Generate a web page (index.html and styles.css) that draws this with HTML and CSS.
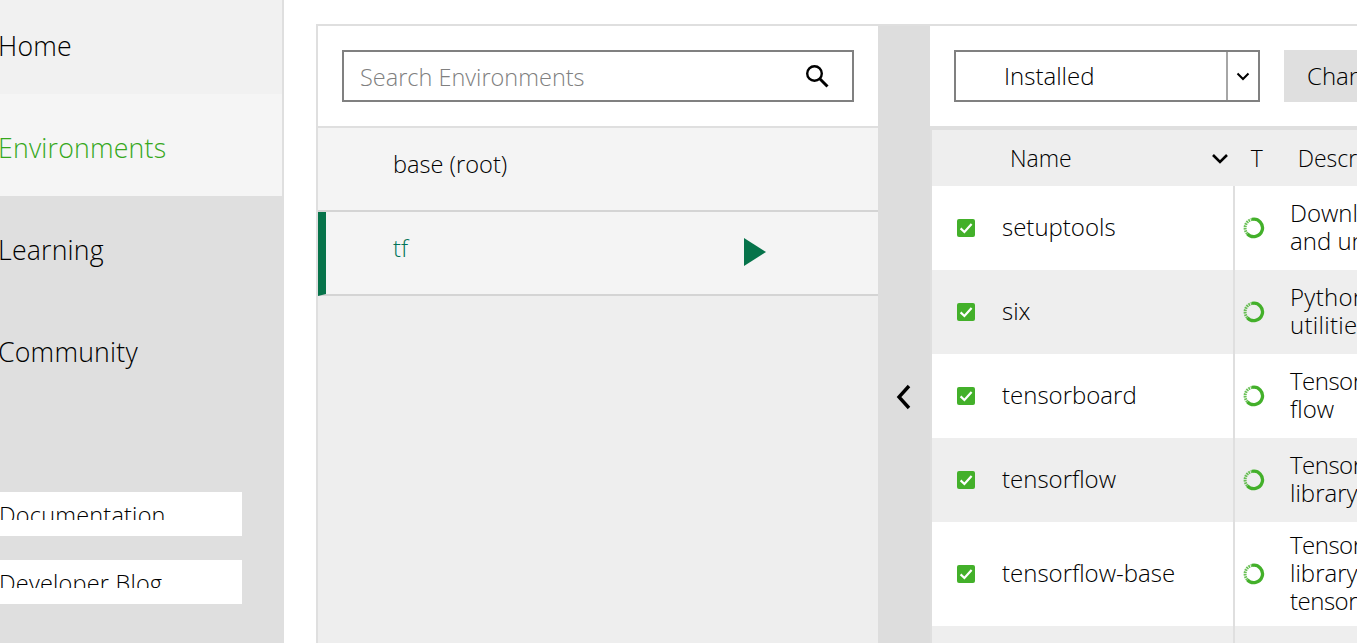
FILE: index.html
```html
<!DOCTYPE html>
<html lang="en">
<head>
<meta charset="utf-8">
<title>Environments</title>
<link rel="stylesheet" href="styles.css">
</head>
<body>
<div class="app">
  <aside class="sidebar">
    <nav class="nav">
      <a class="nav-item nav-home">Home</a>
      <a class="nav-item nav-active">Environments</a>
      <a class="nav-item">Learning</a>
      <a class="nav-item">Community</a>
    </nav>
    <div class="links">
      <a class="link-btn"><span class="link-label">Documentation</span></a>
      <a class="link-btn"><span class="link-label">Developer Blog</span></a>
    </div>
  </aside>
  <main class="main">
    <div class="panel">
      <section class="envs">
        <div class="envs-head">
          <div class="search">
            <span class="search-text">Search Environments</span>
            <svg class="search-icon" width="26" height="26" viewBox="0 0 26 26"><circle cx="10.500" cy="10.500" r="7.300" fill="none" stroke="#000" stroke-width="2.400"/><path d="M15.800 15.800 L23.500 23.500" stroke="#000" stroke-width="3" fill="none"/></svg>
          </div>
        </div>
        <div class="env-row"><span class="env-name">base (root)</span></div>
        <div class="env-row env-selected">
          <span class="env-name">tf</span>
          <svg class="play" width="22" height="28" viewBox="0 0 22 28"><path d="M0 0 L22 14 L0 28 Z" fill="#06734a"/></svg>
        </div>
      </section>
      <div class="handle">
        <svg width="18" height="26" viewBox="0 0 18 26"><path d="M14 2 L4 13 L14 24" fill="none" stroke="#000" stroke-width="3.400"/></svg>
      </div>
      <section class="pkgs">
        <div class="pkgs-head">
          <div class="select">
            <span class="select-value">Installed</span>
            <span class="select-arrow">
              <svg width="14" height="9" viewBox="0 0 14 9"><path d="M1.500 1.500 L7 7 L12.500 1.500" fill="none" stroke="#000" stroke-width="2"/></svg>
            </span>
          </div>
          <button class="channels">Channels</button>
        </div>
        <div class="table">
          <div class="thead">
            <span class="th-name">Name</span>
            <svg class="th-sort" width="18" height="11" viewBox="0 0 18 11"><path d="M2 2 L9 9 L16 2" fill="none" stroke="#000" stroke-width="2.600"/></svg>
            <span class="th-type">T</span>
            <span class="th-desc">Description</span>
          </div>
          <div class="row">
            <span class="cell-check"><svg width="18" height="18" viewBox="0 0 18 18"><use href="#check"/></svg></span>
            <span class="cell-name"><span class="name-text">setuptools</span></span>
            <span class="cell-type"><svg width="22" height="22" viewBox="0 0 22 22"><use href="#ring"/></svg></span>
            <span class="cell-desc">Download, build, install, upgrade,<br>and uninstall Python packages</span>
          </div>
          <div class="row row-alt">
            <span class="cell-check"><svg width="18" height="18" viewBox="0 0 18 18"><use href="#check"/></svg></span>
            <span class="cell-name"><span class="name-text">six</span></span>
            <span class="cell-type"><svg width="22" height="22" viewBox="0 0 22 22"><use href="#ring"/></svg></span>
            <span class="cell-desc desc-wide">Python 2 and 3 compatibility<br>utilities</span>
          </div>
          <div class="row">
            <span class="cell-check"><svg width="18" height="18" viewBox="0 0 18 18"><use href="#check"/></svg></span>
            <span class="cell-name"><span class="name-text">tensorboard</span></span>
            <span class="cell-type"><svg width="22" height="22" viewBox="0 0 22 22"><use href="#ring"/></svg></span>
            <span class="cell-desc"><span class="desc-tight">TensorBoard lets you watch Tensors</span><br>flow</span>
          </div>
          <div class="row row-alt">
            <span class="cell-check"><svg width="18" height="18" viewBox="0 0 18 18"><use href="#check"/></svg></span>
            <span class="cell-name"><span class="name-text">tensorflow</span></span>
            <span class="cell-type"><svg width="22" height="22" viewBox="0 0 22 22"><use href="#ring"/></svg></span>
            <span class="cell-desc"><span class="desc-tight">TensorFlow is a machine learning</span><br>library</span>
          </div>
          <div class="row row-tall">
            <span class="cell-check"><svg width="18" height="18" viewBox="0 0 18 18"><use href="#check"/></svg></span>
            <span class="cell-name"><span class="name-text">tensorflow-base</span></span>
            <span class="cell-type"><svg width="22" height="22" viewBox="0 0 22 22"><use href="#ring"/></svg></span>
            <span class="cell-desc"><span class="desc-tight">TensorFlow is a machine learning</span><br>library, base package contains only<br><span class="desc-tight">tensorflow</span></span>
          </div>
          <div class="row row-alt">
            <span class="cell-check"></span>
            <span class="cell-name"></span>
          </div>
        </div>
      </section>
    </div>
  </main>
</div>
<svg class="defs" width="0" height="0">
  <defs>
    <g id="check">
      <rect width="18" height="18" rx="2" fill="#43b02a"/>
      <path d="M3.600 9.400 L7.400 13 L14.600 5" fill="none" stroke="#fff" stroke-width="2.200"/>
    </g>
    <g id="ring">
      <path d="M9 2.400 A8.700 8.700 0 1 1 4.400 16.800" fill="none" stroke="#43b02a" stroke-width="3.300"/>
      <path d="M4.400 16.800 A8.700 8.700 0 0 1 9 2.400" fill="none" stroke="#43b02a" stroke-width="3" stroke-dasharray="1.600 0.800" opacity="0.8"/>
    </g>
  </defs>
</svg>
</body>
</html>
```
FILE: styles.css
```css
* { box-sizing: border-box; }
html, body { margin: 0; padding: 0; height: 100%; overflow: hidden; background: #fff; }
body { font-family: "Open Sans", "Noto Sans", sans-serif; font-weight: 300; color: #000; }
.app { display: flex; height: 643px; width: 1357px; overflow: hidden; }
.defs { display: block; }

.sidebar { flex: 0 0 284px; height: 643px; background: #dfdfdf; border-right: 2px solid #dfdfdf; overflow: hidden; }
.nav { display: flex; flex-direction: column; }
.nav-item { display: flex; align-items: center; height: 102px; padding-top: 4px; padding-left: 0; font-size: 26.700px; letter-spacing: 0.200px; text-indent: -2px; color: #000; }
.nav-home { height: 94px; padding-top: 0; padding-bottom: 4px; background: #f1f1f1; }
.nav-active { background: #f5f5f5; color: #36a81c; }
.links { display: flex; flex-direction: column; gap: 24px; margin-top: 92px; width: 242px; }
.link-btn { display: block; height: 44px; background: #fff; padding-top: 12px; }
.link-label { display: block; height: 16px; overflow: hidden; text-indent: -1px; font-size: 23.500px; letter-spacing: 0.200px; line-height: 22px; }

.main { flex: 1; padding: 24px 0 0 32px; min-width: 0; }
.panel { display: flex; height: 700px; width: 1100px; border: 2px solid #dfdfdf; border-bottom: 0; border-right: 0; background: #fff; }

.envs { flex: 0 0 560px; background: #eee; }
.envs-head { height: 102px; padding: 24px; background: #fff; border-bottom: 2px solid #dfdfdf; }
.search { display: flex; align-items: center; justify-content: space-between; height: 52px; border: 2px solid #808080; padding: 0 22px 0 16px; }
.search-text { font-size: 23.500px; color: #808080; padding-top: 2px; }
.env-row { display: flex; align-items: center; justify-content: space-between; height: 84px; padding: 0 112px 0 75px; background: #f4f4f4; border-bottom: 2px solid #d4d4d4; font-size: 23.600px; }
.env-name { margin-top: -10px; }
.play { margin-top: -2px; }
.env-selected { border-left: 8px solid #06734a; padding-left: 67px; color: #007358; }

.handle { display: flex; align-items: center; justify-content: center; flex: 0 0 52px; background: #dddddd; height: 617px; padding-top: 124px; }

.pkgs { flex: 1; min-width: 0; }
.pkgs-head { display: flex; gap: 24px; height: 100px; padding: 24px; background: #fff; }
.select { display: flex; flex: 0 0 306px; height: 52px; border: 2px solid #808080; }
.select-value { flex: 1; padding-left: 48px; font-size: 24px; line-height: 48px; }
.select-arrow { display: flex; align-items: center; justify-content: center; flex: 0 0 32px; border-left: 2px solid #a6a6a6; }
.channels { flex: none; height: 52px; width: 160px; padding: 0 0 2px 23px; text-align: left; border: 0; background: #dfdfdf; font: inherit; font-size: 24px; color: #000; }

.table { border-top: 4px solid #dfdfdf; border-left: 2px solid #dfdfdf; height: 600px; }
.thead { display: flex; align-items: center; height: 56px; background: #eee; font-size: 23px; }
.th-name { margin-left: 78px; width: 201px; }
.th-type { margin-left: 22px; width: 47px; }
.row { display: flex; align-items: center; height: 84px; background: #fff; font-size: 24px; }
.row-alt { background: #eee; }
.row-tall { height: 104px; }
.cell-check { display: flex; flex: 0 0 70px; padding-left: 25px; }
.cell-name { flex: 0 0 233px; height: 100%; display: flex; align-items: center; border-right: 2px solid #dfdfdf; }
.name-text { margin-top: -4px; }
.cell-type { display: flex; flex: 0 0 55px; padding-left: 8px; }
.cell-desc { white-space: nowrap; line-height: 28px; margin-top: -2px; }
.desc-tight { letter-spacing: -0.500px; }
.desc-wide { letter-spacing: 0.300px; }
```
